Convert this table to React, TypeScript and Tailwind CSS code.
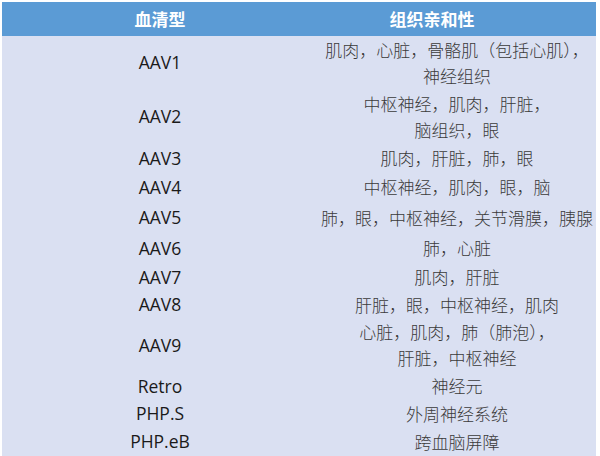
const rows: { name: string; tissue: string[]; h: string }[] = [
  { name: "AAV1", tissue: ["肌肉，心脏，骨骼肌（包括心肌），", "神经组织"], h: "h-[53px]" },
  { name: "AAV2", tissue: ["中枢神经，肌肉，肝脏，", "脑组织，眼"], h: "h-[55px]" },
  { name: "AAV3", tissue: ["肌肉，肝脏，肺，眼"], h: "h-[28px]" },
  { name: "AAV4", tissue: ["中枢神经，肌肉，眼，脑"], h: "h-[30px]" },
  { name: "AAV5", tissue: ["肺，眼，中枢神经，关节滑膜，胰腺"], h: "h-[31px]" },
  { name: "AAV6", tissue: ["肺，心脏"], h: "h-[30px]" },
  { name: "AAV7", tissue: ["肌肉，肝脏"], h: "h-[28px]" },
  { name: "AAV8", tissue: ["肝脏，眼，中枢神经，肌肉"], h: "h-[27px]" },
  { name: "AAV9", tissue: ["心脏，肌肉，肺（肺泡），", "肝脏，中枢神经"], h: "h-[54px]" },
  { name: "Retro", tissue: ["神经元"], h: "h-[28px]" },
  { name: "PHP.S", tissue: ["外周神经系统"], h: "h-[27px]" },
  { name: "PHP.eB", tissue: ["跨血脑屏障"], h: "h-[29px]" },
];

export default function App() {
  return (
    <div className="h-[456px] w-[600px] overflow-hidden bg-white pl-[2px] pt-[2px]">
      <div className="w-[594px] bg-[#dae0f2]">
        <div className="grid h-[34px] grid-cols-[316px_278px] items-center bg-[#5b9bd5] font-['Noto_Sans_CJK_SC',sans-serif] text-[17px] font-bold text-white">
          <div className="text-center">血清型</div>
          <div className="pr-[50px] text-center">组织亲和性</div>
        </div>
        {rows.map((r) => (
          <div key={r.name} className={`grid grid-cols-[316px_278px] items-center ${r.h}`}>
            <div className="text-center font-['Open_Sans','Noto_Sans_CJK_SC',sans-serif] text-[17.5px] text-[#1a1a1a]">
              {r.name}
            </div>
            <div className="text-center font-['Noto_Sans_CJK_SC',sans-serif] text-[17px] font-light leading-[26px] text-[#3a3a3a]">
              {r.tissue.map((t) => (
                <div key={t}>{t}</div>
              ))}
            </div>
          </div>
        ))}
      </div>
    </div>
  );
}
